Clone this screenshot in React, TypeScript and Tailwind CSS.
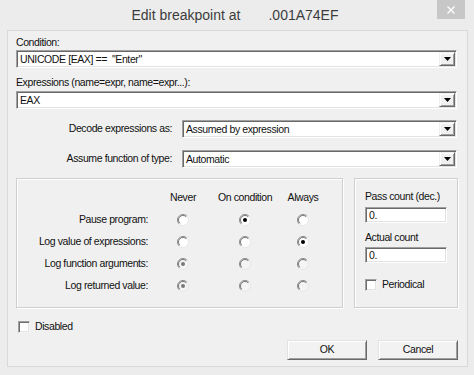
import React from "react";

const FONT = { fontFamily: '"Liberation Sans", Arial, sans-serif' };

function Arrow() {
  return (
    <div className="absolute right-[1px] top-[1px] bottom-[1px] w-[16px] bg-[#f0f0f0] border-t border-l border-t-[#f0f0f0] border-l-[#f0f0f0] border-r border-b border-r-[#696969] border-b-[#696969] shadow-[inset_1px_1px_0_#ffffff,inset_-1px_-1px_0_#a0a0a0] flex items-center justify-center">
      <svg width="7" height="4" viewBox="0 0 7 4">
        <path d="M0 0 H7 L3.5 4 Z" fill="#000" />
      </svg>
    </div>
  );
}

function Combo({ value, className = "" }: { value: string; className?: string }) {
  return (
    <div
      className={`relative h-[18px] bg-white border border-t-[#a0a0a0] border-l-[#a0a0a0] border-r-white border-b-white shadow-[inset_1px_1px_0_#696969,inset_-1px_-1px_0_#e3e3e3] ${className}`}
    >
      <div className="pl-[3px] leading-[16px] text-[#111] whitespace-pre">{value}</div>
      <Arrow />
    </div>
  );
}

function TextBox({ value }: { value: string }) {
  return (
    <div className="h-[16px] w-[82px] bg-white border border-t-[#a0a0a0] border-l-[#a0a0a0] border-r-white border-b-white shadow-[inset_1px_1px_0_#696969,inset_-1px_-1px_0_#e3e3e3]">
      <div className="pl-[3px] leading-[14px] text-[#111]">{value}</div>
    </div>
  );
}

function Radio({ checked = false, dim = false }: { checked?: boolean; dim?: boolean }) {
  return (
    <svg width="12" height="12" viewBox="0 0 12 12">
      <circle cx="6" cy="6" r="5.5" fill={dim ? "#f4f4f4" : "#ffffff"} />
      <path d="M2.1 9.9 A5.5 5.5 0 0 1 9.9 2.1" fill="none" stroke="#8a8a8a" strokeWidth="1" />
      <path d="M2.8 9.2 A4.5 4.5 0 0 1 9.2 2.8" fill="none" stroke="#5a5a5a" strokeWidth="0.8" />
      <path d="M9.9 2.1 A5.5 5.5 0 0 1 2.1 9.9" fill="none" stroke="#e6e6e6" strokeWidth="1" />
      {checked && <circle cx="6" cy="6" r="2" fill={dim ? "#7a7a7a" : "#000"} />}
    </svg>
  );
}

function CheckBox() {
  return (
    <div className="w-[12px] h-[12px] bg-white border border-t-[#a0a0a0] border-l-[#a0a0a0] border-r-[#f4f4f4] border-b-[#f4f4f4] shadow-[inset_1px_1px_0_#6d6d6d,inset_-1px_-1px_0_#e3e3e3]" />
  );
}

function Button({ label }: { label: string }) {
  return (
    <div className="w-[80px] h-[20px] bg-[#f2f2f2] border border-t-[#e3e3e3] border-l-[#e3e3e3] border-r-[#696969] border-b-[#696969] shadow-[inset_1px_1px_0_#ffffff,inset_-1px_-1px_0_#a0a0a0] flex items-center justify-center text-[#111]">
      {label}
    </div>
  );
}

const rows: { label: string; v: [boolean, boolean, boolean]; dim?: boolean }[] = [
  { label: "Pause program:", v: [false, true, false] },
  { label: "Log value of expressions:", v: [false, false, true] },
  { label: "Log function arguments:", v: [true, false, false], dim: true },
  { label: "Log returned value:", v: [true, false, false], dim: true },
];

export default function App() {
  return (
    <div className="w-[474px] h-[375px] bg-[#ececec] flex flex-col overflow-hidden" style={FONT}>
      {/* title bar */}
      <div className="relative h-[30px] flex items-center justify-center text-[14px] text-[#3c3c3c]">
        <span className="ml-[-4px]">Edit breakpoint at</span>
        <span className="ml-[28px]">.001A74EF</span>
        <div className="absolute right-[9px] top-0 w-[28px] h-[19px] bg-[#c7c7c7] flex items-center justify-center">
          <svg width="8" height="8" viewBox="0 0 8 8">
            <path d="M0.5 0.5 L7.5 7.5 M7.5 0.5 L0.5 7.5" stroke="#fff" strokeWidth="1.4" />
          </svg>
        </div>
      </div>

      {/* client */}
      <div className="ml-[7px] w-[461px] h-[337px] bg-[#f0f0f0] border border-[#d9d9d9] pl-[8px] pr-[9px] pt-[5px] flex flex-col text-[10.5px] tracking-[-0.4px] text-[#111]">
        <div className="h-[13px] leading-[13px]">Condition:</div>
        <Combo value={'UNICODE [EAX] ==  "Enter"'} className="mt-[1px] w-[441px]" />
        <div className="h-[13px] leading-[13px] mt-[8px]">Expressions (name=expr, name=expr...):</div>
        <Combo value="EAX" className="mt-[2px] w-[441px]" />

        <div className="mt-[11px] flex items-center">
          <div className="w-[156px] text-right pr-0">Decode expressions as:</div>
          <Combo value="Assumed by expression" className="ml-[10px] w-[275px]" />
        </div>
        <div className="mt-[12px] flex items-center">
          <div className="w-[156px] text-right">Assume function of type:</div>
          <Combo value="Automatic" className="ml-[10px] w-[275px]" />
        </div>

        <div className="mt-[10px] flex">
          <div className="w-[327px] h-[130px] border border-[#cfcfcf] shadow-[inset_1px_1px_0_#ffffff,1px_1px_0_#ffffff] pt-[8px]">
            <div className="grid grid-cols-[131px_70px_54px_62px] auto-rows-[22px] items-center">
              <div />
              <div className="text-center whitespace-nowrap">Never</div>
              <div className="text-center whitespace-nowrap">On condition</div>
              <div className="text-center whitespace-nowrap">Always</div>
              {rows.map((r) => (
                <React.Fragment key={r.label}>
                  <div className="text-right whitespace-nowrap">{r.label}</div>
                  {r.v.map((c, i) => (
                    <div key={i} className="flex justify-center">
                      <Radio checked={c} dim={r.dim} />
                    </div>
                  ))}
                </React.Fragment>
              ))}
            </div>
          </div>
          <div className="ml-[11px] w-[104px] h-[130px] border border-[#cfcfcf] shadow-[inset_1px_1px_0_#ffffff,1px_1px_0_#ffffff] pl-[10px] pt-[11px] flex flex-col">
            <div className="h-[13px] leading-[13px] whitespace-nowrap">Pass count (dec.)</div>
            <div className="mt-[4px]"><TextBox value="0." /></div>
            <div className="h-[13px] leading-[13px] mt-[8px]">Actual count</div>
            <div className="mt-[3px]"><TextBox value="0." /></div>
            <div className="mt-[14px] flex items-center">
              <CheckBox />
              <span className="ml-[5px]">Periodical</span>
            </div>
          </div>
        </div>

        <div className="mt-[12px] flex items-center h-[13px] pl-[2px]">
          <CheckBox />
          <span className="ml-[5px]">Disabled</span>
        </div>

        <div className="mt-[7px] flex justify-end gap-[11px] pr-0">
          <Button label="OK" />
          <Button label="Cancel" />
        </div>
      </div>
    </div>
  );
}
